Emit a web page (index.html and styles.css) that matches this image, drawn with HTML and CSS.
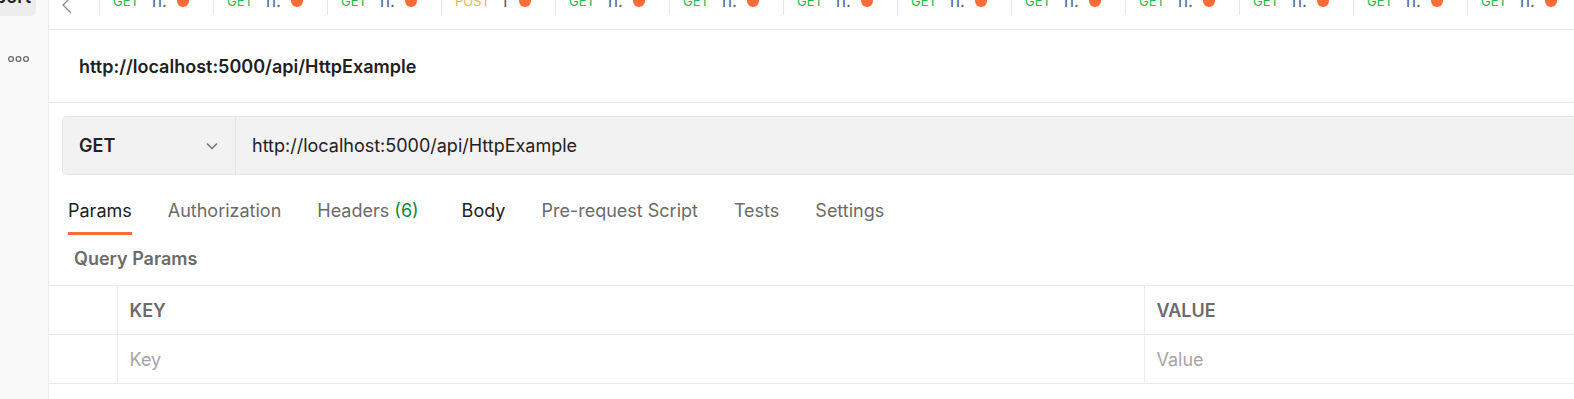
FILE: index.html
```html
<!DOCTYPE html>
<html lang="en">
<head>
    <meta charset="UTF-8">
    <meta name="viewport" content="width=device-width, initial-scale=1.0">
    <title>HttpExample</title>
    <link rel="stylesheet" href="styles.css">
</head>
<body>
    <div class="app">
        <aside class="sidebar">
            <div class="import-btn">Import</div>
            <div class="more-btn">
                <svg width="22" height="8" viewBox="0 0 22 8">
                    <circle cx="3" cy="4" r="2.4" fill="none" stroke="#6b6b6b" stroke-width="1.3"/>
                    <circle cx="10.5" cy="4" r="2.4" fill="none" stroke="#6b6b6b" stroke-width="1.3"/>
                    <circle cx="18" cy="4" r="2.4" fill="none" stroke="#6b6b6b" stroke-width="1.3"/>
                </svg>
            </div>
        </aside>

        <main class="main">
            <div class="tabbar">
                <div class="tab-nav">
                    <svg width="10" height="18" viewBox="0 0 10 18">
                        <path d="M9 1 L1 9 L9 17" fill="none" stroke="#8c8c8c" stroke-width="1.3"/>
                    </svg>
                </div>
                <div class="tab"><span class="m get">GET</span><span class="t-name">n.</span><span class="dot"></span></div>
                <div class="tab"><span class="m get">GET</span><span class="t-name">n.</span><span class="dot"></span></div>
                <div class="tab"><span class="m get">GET</span><span class="t-name">n.</span><span class="dot"></span></div>
                <div class="tab"><span class="m post">POST</span><span class="t-name">I</span><span class="dot"></span></div>
                <div class="tab"><span class="m get">GET</span><span class="t-name">n.</span><span class="dot"></span></div>
                <div class="tab"><span class="m get">GET</span><span class="t-name">n.</span><span class="dot"></span></div>
                <div class="tab"><span class="m get">GET</span><span class="t-name">n.</span><span class="dot"></span></div>
                <div class="tab"><span class="m get">GET</span><span class="t-name">n.</span><span class="dot"></span></div>
                <div class="tab"><span class="m get">GET</span><span class="t-name">n.</span><span class="dot"></span></div>
                <div class="tab"><span class="m get">GET</span><span class="t-name">n.</span><span class="dot"></span></div>
                <div class="tab"><span class="m get">GET</span><span class="t-name">n.</span><span class="dot"></span></div>
                <div class="tab"><span class="m get">GET</span><span class="t-name">n.</span><span class="dot"></span></div>
                <div class="tab"><span class="m get">GET</span><span class="t-name">n.</span><span class="dot"></span></div>
            </div>

            <div class="req-name">http://localhost:5000/api/HttpExample</div>

            <div class="urlbar">
                <div class="method">
                    <span>GET</span>
                    <svg width="12" height="8" viewBox="0 0 12 8">
                        <path d="M1 1.5 L6 6.5 L11 1.5" fill="none" stroke="#6b6b6b" stroke-width="1.3"/>
                    </svg>
                </div>
                <div class="url">http://localhost:5000/api/HttpExample</div>
            </div>

            <nav class="req-tabs">
                <span class="rt active">Params</span>
                <span class="rt">Authorization</span>
                <span class="rt headers">Headers <span class="count">(6)</span></span>
                <span class="rt dark">Body</span>
                <span class="rt">Pre-request Script</span>
                <span class="rt">Tests</span>
                <span class="rt">Settings</span>
            </nav>

            <div class="section-title">Query Params</div>

            <table class="params">
                <thead>
                    <tr>
                        <th class="check"></th>
                        <th class="key">KEY</th>
                        <th>VALUE</th>
                    </tr>
                </thead>
                <tbody>
                    <tr>
                        <td class="check"></td>
                        <td class="key placeholder">Key</td>
                        <td class="placeholder">Value</td>
                    </tr>
                </tbody>
            </table>
        </main>
    </div>
</body>
</html>
```

FILE: styles.css
```css
body {
    font-family: Inter, "Noto Sans", sans-serif;
    margin: 0;
    padding: 0;
    background-color: #fff;
    color: #212121;
    overflow: hidden;
    height: 399px;
}

.app {
    display: flex;
    height: 100%;
}

.sidebar {
    width: 48px;
    flex-shrink: 0;
    background-color: #f9f9f9;
    border-right: 1px solid #ebebeb;
    overflow: hidden;
}

.import-btn {
    width: 76px;
    height: 32px;
    margin-left: -40px;
    margin-top: -16px;
    background-color: #ededed;
    border-radius: 5px;
    font-weight: 600;
    font-size: 18px;
    display: flex;
    align-items: flex-end;
    justify-content: flex-end;
    padding-right: 5px;
    box-sizing: border-box;
    line-height: 1;
    padding-bottom: 10px;
}

.more-btn {
    margin-top: 39px;
    padding-left: 8px;
    height: 8px;
}

.more-btn svg {
    display: block;
}

.main {
    flex: 1;
    min-width: 0;
    overflow: hidden;
}

/* open tabs strip */
.tabbar {
    display: flex;
    align-items: center;
    height: 56px;
    margin-top: -27px;
    border-bottom: 1px solid #ebebeb;
    white-space: nowrap;
}

.tab-nav {
    width: 50px;
    flex-shrink: 0;
    padding-left: 13px;
    box-sizing: border-box;
    height: 100%;
    display: flex;
    align-items: center;
    margin-top: 8px;
}

.tab {
    width: 114px;
    flex-shrink: 0;
    height: 28px;
    border-left: 1px solid #e6e6e6;
    box-sizing: border-box;
    display: flex;
    align-items: center;
    padding: 0 24px 0 13px;
    font-size: 13px;
}

.get {
    color: #0cbb52;
}

.post {
    color: #ffb14a;
}

.t-name {
    margin-left: 13px;
    color: #5f5f7a;
    font-size: 17px;
}

.dot {
    width: 12px;
    height: 12px;
    margin-left: auto;
    border-radius: 50%;
    background-color: #ff6c37;
}

.req-name {
    height: 72px;
    display: flex;
    align-items: center;
    padding-left: 30px;
    font-size: 18px;
    font-weight: 600;
    border-bottom: 1px solid #ebebeb;
}

.urlbar {
    display: flex;
    height: 59px;
    margin: 13px 0 0 13px;
    background-color: #f2f2f2;
    border: 1px solid #e6e6e6;
    border-right: none;
    border-radius: 5px 0 0 5px;
    box-sizing: border-box;
}

.method {
    width: 173px;
    flex-shrink: 0;
    display: flex;
    align-items: center;
    justify-content: space-between;
    padding: 0 17px 0 16px;
    box-sizing: border-box;
    border-right: 1px solid #e6e6e6;
    font-size: 18px;
    font-weight: 600;
}

.url {
    display: flex;
    align-items: center;
    padding-left: 16px;
    font-size: 18px;
    color: #212121;
}

.req-tabs {
    display: flex;
    gap: 36px;
    padding-left: 19px;
    margin-top: 23px;
    height: 37px;
}

.rt {
    font-size: 18px;
    color: #6b6b6b;
    line-height: 25px;
    height: 37px;
    box-sizing: border-box;
}

.rt.active {
    color: #212121;
    border-bottom: 3px solid #ff6c37;
}

.rt.dark {
    color: #212121;
}

.rt.headers {
    margin-right: 7px;
}

.count {
    color: #0b8a3b;
}

.section-title {
    padding-left: 25px;
    margin-top: 12px;
    height: 38px;
    line-height: 24px;
    font-size: 18px;
    font-weight: 600;
    color: #6b6b6b;
}

table.params {
    width: calc(100% + 60px);
    border-collapse: collapse;
    margin-top: 0;
}

.params th, .params td {
    height: 49px;
    padding: 0 0 0 12px;
    text-align: left;
    border-top: 1px solid #ebebeb;
    border-bottom: 1px solid #ebebeb;
    box-sizing: border-box;
}

.params th {
    font-size: 18px;
    font-weight: 600;
    color: #6b6b6b;
}

.params td {
    font-size: 18px;
}

.params .check {
    width: 68px;
    padding: 0;
}

.params .key {
    width: 1027px;
    border-left: 1px solid #ebebeb;
    border-right: 1px solid #ebebeb;
}

.placeholder {
    color: #a6a6a6;
}
```
